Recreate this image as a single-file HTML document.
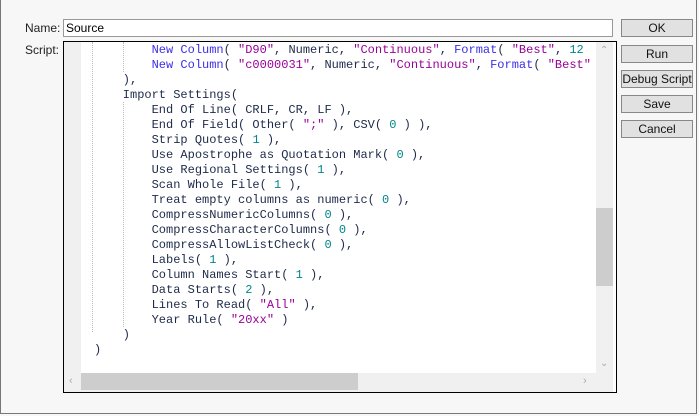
<!DOCTYPE html><html><head><style>
body{margin:0;width:699px;height:416px;background:#f7f7f7;position:relative;overflow:hidden;font-family:"Liberation Sans",sans-serif;font-size:12px}
.frame{position:absolute;left:0;top:0;width:697px;height:414px;border-left:1px solid #777;border-right:1px solid #777;border-bottom:1px solid #777;box-sizing:border-box}
.lbl{position:absolute;color:#222}
.name{position:absolute;left:63px;top:19px;width:550px;height:18px;border:1px solid #999;background:#fff;box-sizing:border-box;padding-left:2px;line-height:16px}
.box{position:absolute;left:63px;top:41px;width:554px;height:352px;border:1px solid #000;background:#fff;box-sizing:border-box;overflow:hidden}
.gut{position:absolute;left:0;top:0;width:17px;height:331px;background:#f0f0f0}
.code{position:absolute;left:0;top:0;font-family:"Liberation Mono",monospace;font-size:12px;line-height:15px;color:#1e2a4a}
.code div{height:15px;white-space:pre}
.k{color:#3b2ee8}.s{color:#990099}.n{color:#00868b}
.vs{position:absolute;left:532px;top:0;width:17px;height:331px;background:#f0f0f0}
.hs{position:absolute;left:0;top:331px;width:549px;height:19px;background:#f0f0f0}
.btn{position:absolute;left:621px;width:72px;height:18px;border:1px solid #888;background:#e1e1e1;box-sizing:border-box;text-align:center;line-height:16px;color:#111}
.guide{position:absolute;border-left:1px dotted #bbb}
</style></head><body>
<div class="frame"></div>
<div class="lbl" style="left:25px;top:21px">Name:</div>
<div class="lbl" style="left:25px;top:43px">Script:</div>
<div class="name">Source</div>
<div class="box">
<div class="gut"></div>
<div class="guide" style="left:28px;top:0;height:290px"></div>
<div class="guide" style="left:59px;top:0;height:30px"></div>
<div class="guide" style="left:59px;top:60px;height:225px"></div>
<div class="code" style="top:1px;left:30px"><div>        <span class="k">New Column</span>( <span class="s">"D90"</span>, Numeric, <span class="s">"Continuous"</span>, <span class="k">Format</span>( <span class="s">"Best"</span>, <span class="n">12</span></div><div>        <span class="k">New Column</span>( <span class="s">"c0000031"</span>, Numeric, <span class="s">"Continuous"</span>, <span class="k">Format</span>( <span class="s">"Best"</span></div><div>    ),</div><div>    Import Settings(</div><div>        End Of Line( CRLF, CR, LF ),</div><div>        End Of Field( Other( <span class="s">";"</span> ), CSV( <span class="n">0</span> ) ),</div><div>        Strip Quotes( <span class="n">1</span> ),</div><div>        Use Apostrophe as Quotation Mark( <span class="n">0</span> ),</div><div>        Use Regional Settings( <span class="n">1</span> ),</div><div>        Scan Whole File( <span class="n">1</span> ),</div><div>        Treat empty columns as numeric( <span class="n">0</span> ),</div><div>        CompressNumericColumns( <span class="n">0</span> ),</div><div>        CompressCharacterColumns( <span class="n">0</span> ),</div><div>        CompressAllowListCheck( <span class="n">0</span> ),</div><div>        Labels( <span class="n">1</span> ),</div><div>        Column Names Start( <span class="n">1</span> ),</div><div>        Data Starts( <span class="n">2</span> ),</div><div>        Lines To Read( <span class="s">"All"</span> ),</div><div>        Year Rule( <span class="s">"20xx"</span> )</div><div>    )</div><div>)</div></div>
<div class="vs"><div style="position:absolute;left:0;top:166px;width:17px;height:78px;background:#cdcdcd"></div>
<div style="position:absolute;left:4px;top:3px;color:#aaa;font-size:10px">&#8963;</div>
<div style="position:absolute;left:4px;top:316px;color:#aaa;font-size:10px">&#8964;</div></div>
<div class="hs"><div style="position:absolute;left:17px;top:0;width:277px;height:17px;background:#cdcdcd"></div>
<div style="position:absolute;left:5px;top:2px;color:#aaa;font-size:11px">‹</div>
<div style="position:absolute;left:519px;top:2px;color:#aaa;font-size:11px">›</div></div>
</div>
<div class="btn" style="top:19px">OK</div>
<div class="btn" style="top:45px">Run</div>
<div class="btn" style="top:70px">Debug Script</div>
<div class="btn" style="top:95px">Save</div>
<div class="btn" style="top:120px">Cancel</div>
</body></html>
